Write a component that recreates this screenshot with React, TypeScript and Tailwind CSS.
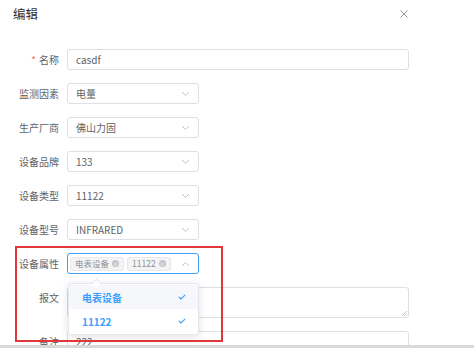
import React from 'react';

const font = { fontFamily: '"Noto Sans CJK SC", "Liberation Sans", sans-serif' };

const Chevron: React.FC<{ up?: boolean }> = ({ up }) => (
    <svg width="9" height="6" viewBox="0 0 9 6" className="text-[#c0c4cc]">
        <path d={up ? 'M1 5 L4.5 1.5 L8 5' : 'M1 1 L4.5 4.5 L8 1'} fill="none" stroke="currentColor" strokeWidth="1" />
    </svg>
);

const Row: React.FC<{ label: string; required?: boolean; children: React.ReactNode }> = ({ label, required, children }) => (
    <div className="flex items-start">
        <div className="w-[67px] shrink-0 pr-[8px] text-right text-[10px] leading-[21px] text-[#606266]">
            {required && <span className="text-[#f56c6c] mr-[3px]">*</span>}
            {label}
        </div>
        {children}
    </div>
);

const SelectBox: React.FC<{ value: string }> = ({ value }) => (
    <div className="w-[132px] h-[21px] border border-[#dcdfe6] rounded-[3px] flex items-center justify-between pl-[8px] pr-[8px] text-[10px] text-[#606266]">
        <span>{value}</span>
        <Chevron />
    </div>
);

const Tag: React.FC<{ text: string }> = ({ text }) => (
    <span className="flex items-center h-[14px] px-[4px] bg-[#f4f4f5] border border-[#e9e9eb] rounded-[2px] text-[8.5px] text-[#909399] gap-[3px]">
        {text}
        <span className="w-[7px] h-[7px] rounded-full bg-[#c0c4cc] flex items-center justify-center text-white text-[6px] leading-none">×</span>
    </span>
);

const Check: React.FC = () => (
    <svg width="8" height="6" viewBox="0 0 8 6">
        <path d="M0.8 3 L3 5 L7.2 0.8" fill="none" stroke="#409eff" strokeWidth="1.1" />
    </svg>
);

export default function App() {
    return (
        <div className="relative w-[474px] h-[348px] overflow-hidden bg-white" style={font}>
            {/* Header */}
            <div className="flex items-center justify-between pl-[13px] pr-[66px] pt-[4px] h-[24px]">
                <span className="text-[12.5px] text-[#303133]">编辑</span>
                <svg width="8" height="8" viewBox="0 0 8 8">
                    <path d="M0.5 0.5 L7.5 7.5 M7.5 0.5 L0.5 7.5" stroke="#909399" strokeWidth="1" />
                </svg>
            </div>

            {/* Form */}
            <div className="flex flex-col gap-[13px] pt-[25px] pr-[65px]">
                <Row label="名称" required>
                    <div className="flex-1 h-[21px] border border-[#dcdfe6] rounded-[3px] pl-[8px] text-[10px] leading-[19px] text-[#606266]">casdf</div>
                </Row>
                <Row label="监测因素"><SelectBox value="电量" /></Row>
                <Row label="生产厂商"><SelectBox value="佛山力固" /></Row>
                <Row label="设备品牌"><SelectBox value="133" /></Row>
                <Row label="设备类型"><SelectBox value="11122" /></Row>
                <Row label="设备型号"><SelectBox value="INFRARED" /></Row>
                <Row label="设备属性">
                    <div className="w-[132px] h-[21px] border border-[#409eff] rounded-[3px] flex items-center justify-between pl-[2px] pr-[8px]">
                        <div className="flex items-center gap-[3px]">
                            <Tag text="电表设备" />
                            <Tag text="11122" />
                        </div>
                        <Chevron up />
                    </div>
                </Row>
                <Row label="报文">
                    <div className="relative flex-1 h-[31px] border border-[#dcdfe6] rounded-[3px]">
                        <svg width="5" height="5" viewBox="0 0 5 5" className="absolute right-[1px] bottom-[1px]">
                            <path d="M0 5 L5 0 M2.5 5 L5 2.5" stroke="#b0b0b0" strokeWidth="0.8" />
                        </svg>
                    </div>
                </Row>
                <Row label="备注">
                    <div className="flex-1 h-[21px] border border-[#dcdfe6] rounded-[3px] pl-[8px] text-[10px] leading-[19px] text-[#606266]">222</div>
                </Row>
            </div>

            {/* Dropdown popper */}
            <div className="absolute left-[68px] top-[283px] w-[131px] bg-white border border-[#e4e7ed] rounded-[3px] shadow-[0_2px_8px_rgba(0,0,0,0.12)] py-[1px] z-10">
                <div className="absolute -top-[4px] left-[24px] w-[7px] h-[7px] bg-white border-l border-t border-[#e4e7ed] rotate-45"></div>
                <div className="flex items-center justify-between h-[24px] pl-[13px] pr-[12px] bg-[#f5f7fa] text-[10px] font-bold text-[#409eff]">
                    电表设备
                    <Check />
                </div>
                <div className="flex items-center justify-between h-[24px] pl-[13px] pr-[12px] text-[10px] font-bold text-[#409eff]">
                    11122
                    <Check />
                </div>
            </div>

            {/* Annotation box */}
            <div className="absolute left-[15px] top-[246px] w-[208px] h-[96px] border-2 border-[#e0363c] z-20 pointer-events-none"></div>

            {/* Bottom strip */}
            <div className="absolute left-0 right-0 bottom-0 h-[3px] bg-[#d9d9d9] z-30"></div>
        </div>
    );
}
